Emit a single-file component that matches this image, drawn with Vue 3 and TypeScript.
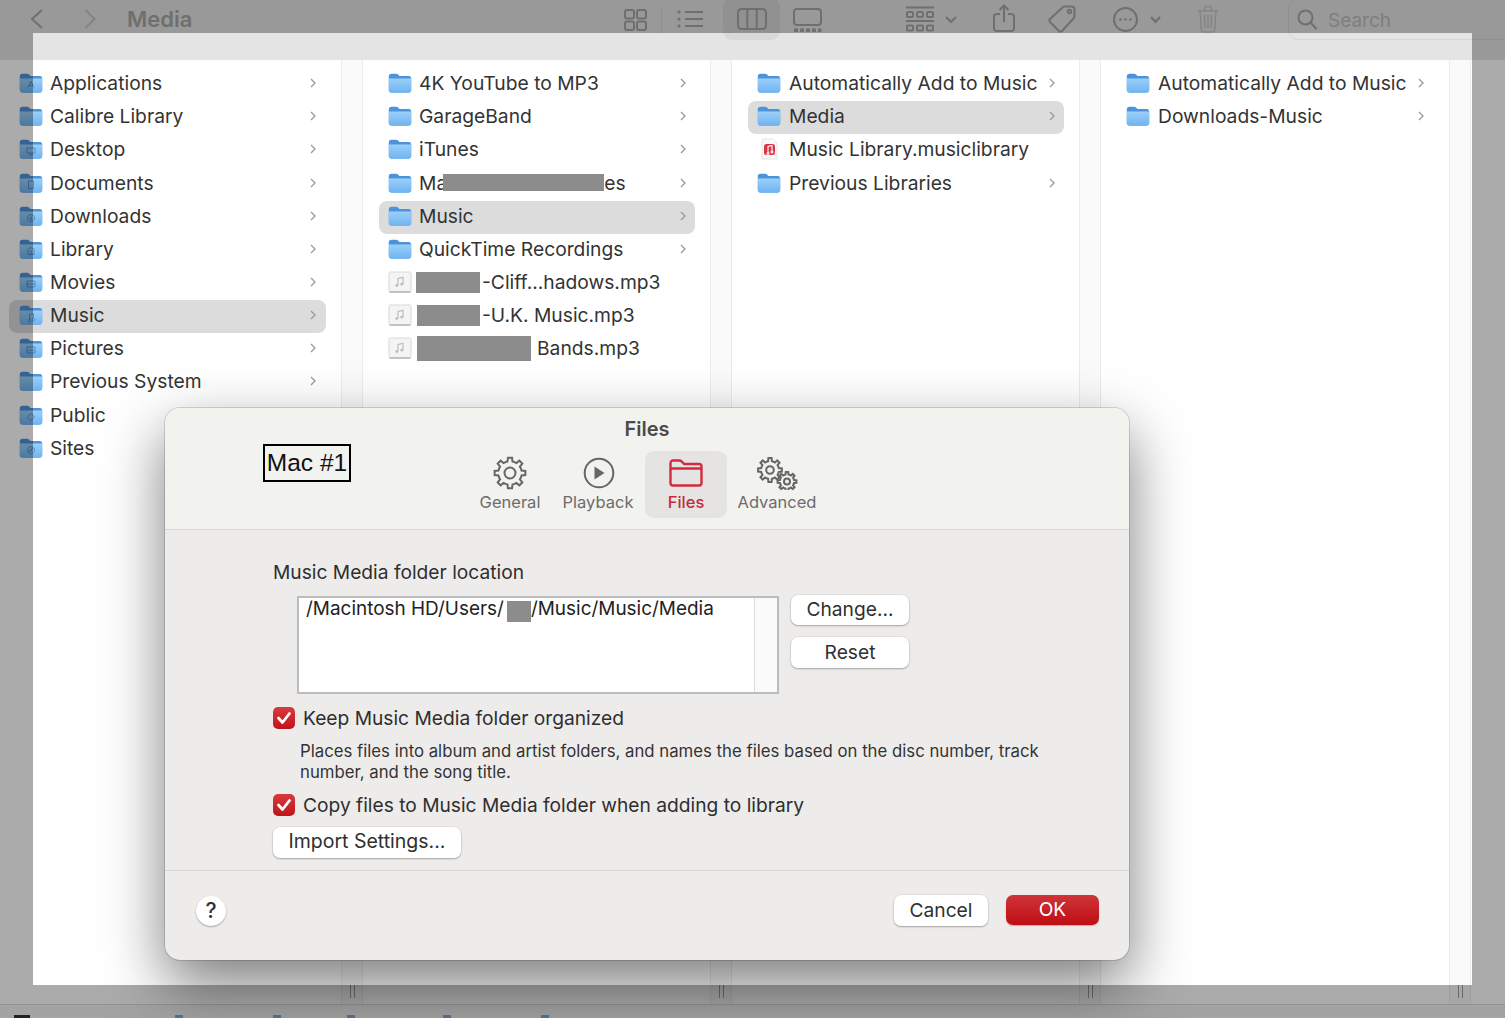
<script setup lang="ts">
interface Row {
  icon: 'folder' | 'file' | 'lib'
  text: string
  before?: string
  redact?: string
  glyph?: string
  selected?: boolean
  chevron?: boolean
}

function f(text: string, extra: Partial<Row> = {}): Row {
  return { icon: 'folder', text, chevron: true, ...extra }
}

const columns: { cls: string; rows: Row[] }[] = [
  {
    cls: 'col-a',
    rows: [
      f('Applications', { glyph: 'M9 14.5 12 8.5l3 6M10 12.5h4' }),
      f('Calibre Library'),
      f('Desktop', { glyph: 'M8 9h8v5H8zM10 15.5h4' }),
      f('Documents', { glyph: 'M9.5 8h5v7.5h-5z' }),
      f('Downloads', { glyph: 'M12 8.5a3.5 3.5 0 1 0 .01 0M12 10v3.5M10.5 12l1.5 1.5 1.5-1.5' }),
      f('Library', { glyph: 'M8.5 10.5 12 8.5l3.5 2M9 11v4M12 11v4M15 11v4M8.5 15.5h7' }),
      f('Movies', { glyph: 'M8 9h8v6H8zM8 12h8' }),
      f('Music', { selected: true, glyph: 'M10.5 14.5V9.5l4-1v5M10.5 14.5a1.2 1.2 0 1 1-.01 0M14.5 13.5a1.2 1.2 0 1 1-.01 0' }),
      f('Pictures', { glyph: 'M8 9h8v6H8zM8 14l3-2.5 2 1.5 1.5-1 1.5 1.5' }),
      f('Previous System'),
      f('Public', { glyph: 'M12 8.5l3.5 3.5-3.5 3.5L8.500 12z' }),
      f('Sites', { glyph: 'M12 8.500a3.500 3.500 0 1 0 .01 0M13.500 10.500l-2 1-1 2 2-1z' }),
    ],
  },
  {
    cls: 'col-b',
    rows: [
      f('4K YouTube to MP3'),
      f('GarageBand'),
      f('iTunes'),
      f('es', { before: 'Ma', redact: 'r-ma' }),
      f('Music', { selected: true }),
      f('QuickTime Recordings'),
      { icon: 'file', text: '-Cliff...hadows.mp3', redact: 'r-a' },
      { icon: 'file', text: '-U.K. Music.mp3', redact: 'r-b' },
      { icon: 'file', text: 'Bands.mp3', redact: 'r-c' },
    ],
  },
  {
    cls: 'col-c',
    rows: [
      f('Automatically Add to Music'),
      f('Media', { selected: true }),
      { icon: 'lib', text: 'Music Library.musiclibrary' },
      f('Previous Libraries'),
    ],
  },
  {
    cls: 'col-d',
    rows: [f('Automatically Add to Music'), f('Downloads-Music')],
  },
]

function gear(cx: number, cy: number, outer: number, inner: number, teeth: number): string {
  const pts: string[] = []
  const step = (Math.PI * 2) / teeth
  for (let i = 0; i < teeth; i++) {
    const a = i * step
    const list: [number, number][] = [
      [inner, a - step * 0.5],
      [inner, a - step * 0.27],
      [outer, a - step * 0.17],
      [outer, a + step * 0.17],
      [inner, a + step * 0.27],
    ]
    for (const [r, t] of list) {
      pts.push(`${(cx + r * Math.cos(t)).toFixed(2)} ${(cy + r * Math.sin(t)).toFixed(2)}`)
    }
  }
  return `M${pts.join('L')}Z`
}

const generalGear = gear(20, 17, 15.5, 11.8, 8)
const bigGear = gear(14, 13, 12, 9, 8)
const smallGear = gear(31, 24.500, 9.500, 7.200, 8)
</script>

<template>
  <div class="stage">
    <svg class="defs" width="0" height="0" aria-hidden="true">
      <defs>
        <linearGradient id="folderFront" x1="0" y1="0" x2="0" y2="1">
          <stop offset="0" stop-color="#9bd0f8" />
          <stop offset="1" stop-color="#6fb3f1" />
        </linearGradient>
        <symbol id="folder" viewBox="0 0 24 20">
          <path d="M.8 3.500A2.700 2.700 0 0 1 3.500.8h4.700c.8 0 1.300.3 1.800.8l1.500 1.500h9.300a2.400 2.400 0 0 1 2.400 2.400v11a3 3 0 0 1-3 3H3.800a3 3 0 0 1-3-3z" fill="#4b94dd" />
          <path d="M.8 5.600h22.400V17a2.700 2.700 0 0 1-2.700 2.700H3.500A2.700 2.700 0 0 1 .8 17z" fill="url(#folderFront)" />
        </symbol>
      </defs>
    </svg>

    <header class="toolbar">
      <div class="tb-left">
        <svg class="back" width="14" height="20" viewBox="0 0 14 20"><path d="M12 1 2 10l10 9" /></svg>
        <svg class="forward" width="12" height="20" viewBox="0 0 12 20"><path d="m1.500 1 9 9-9 9" /></svg>
        <span class="title">Media</span>
      </div>
      <svg class="ic-grid" width="23" height="22" viewBox="0 0 23 22">
        <rect x="1" y="1" width="9" height="8.500" rx="2" /><rect x="13" y="1" width="9" height="8.500" rx="2" />
        <rect x="1" y="12.500" width="9" height="8.500" rx="2" /><rect x="13" y="12.500" width="9" height="8.500" rx="2" />
      </svg>
      <span class="tb-sep"></span>
      <svg class="ic-list" width="27" height="20" viewBox="0 0 27 20">
        <path d="M8 3h18M8 10h18M8 17h18" />
        <circle class="solid" cx="2" cy="3" r="1.500" /><circle class="solid" cx="2" cy="10" r="1.500" /><circle class="solid" cx="2" cy="17" r="1.500" />
      </svg>
      <div class="view-btn">
        <svg width="30" height="22" viewBox="0 0 30 22">
          <rect x="1" y="1" width="28" height="20" rx="3.500" /><path d="M10.300 1v20M19.700 1v20" />
        </svg>
      </div>
      <svg class="ic-gallery" width="29" height="24" viewBox="0 0 29 24">
        <rect x="1" y="1" width="27" height="16" rx="3" />
        <g class="solid"><rect x="1" y="20.500" width="4" height="3.500" /><rect x="7" y="20.500" width="4" height="3.500" /><rect x="13" y="20.500" width="4" height="3.500" /><rect x="19" y="20.500" width="4" height="3.500" /><rect x="25" y="20.500" width="3.500" height="3.500" /></g>
      </svg>
      <svg class="ic-group" width="28" height="27" viewBox="0 0 28 27">
        <path d="M0 1.500h28M0 15h28" />
        <rect x="1" y="6" width="6" height="5" rx="1" /><rect x="11" y="6" width="6" height="5" rx="1" /><rect x="21" y="6" width="6" height="5" rx="1" />
        <rect x="1" y="19.500" width="6" height="5" rx="1" /><rect x="11" y="19.500" width="6" height="5" rx="1" /><rect x="21" y="19.500" width="6" height="5" rx="1" />
      </svg>
      <svg class="ic-chev1" width="12" height="8" viewBox="0 0 12 8"><path d="m1 1 5 5 5-5" /></svg>
      <svg class="ic-share" width="22" height="28" viewBox="0 0 22 28">
        <path d="M7 10H3.500A2.500 2.500 0 0 0 1 12.500v12A2.500 2.500 0 0 0 3.500 27h15a2.500 2.500 0 0 0 2.500-2.500v-12a2.500 2.500 0 0 0-2.500-2.500H15M11 18V1.500M6.500 6 11 1.500 15.500 6" />
      </svg>
      <svg class="ic-tag" width="30" height="30" viewBox="0 0 30 30">
        <path d="M17.500 2.500h7.500a2.500 2.500 0 0 1 2.500 2.500v7.500a3 3 0 0 1-1 2L15 27a2 2 0 0 1-3 0L3 18a2 2 0 0 1 0-3L15.500 3.500a3 3 0 0 1 2-1z" />
        <circle cx="22.500" cy="7.500" r="1.800" />
      </svg>
      <svg class="ic-more" width="25" height="25" viewBox="0 0 25 25">
        <circle cx="12.500" cy="12.500" r="11.500" />
        <circle class="solid" cx="7.500" cy="12.500" r="1.300" /><circle class="solid" cx="12.500" cy="12.500" r="1.300" /><circle class="solid" cx="17.500" cy="12.500" r="1.300" />
      </svg>
      <svg class="ic-chev2" width="11" height="8" viewBox="0 0 11 8"><path d="m1 1 4.500 5L10 1" /></svg>
      <svg class="ic-trash" width="22" height="28" viewBox="0 0 22 28">
        <path d="M1 6h20M7.500 6V3.500A2 2 0 0 1 9.500 1.500h3a2 2 0 0 1 2 2V6M3 6l1.500 19.500a1.500 1.500 0 0 0 1.500 1.500h10a1.500 1.500 0 0 0 1.500-1.500L19 6M7.500 10l.5 13M11 10v13M14.500 10 14 23" />
      </svg>
      <div class="search">
        <svg width="21" height="21" viewBox="0 0 21 21"><circle cx="8.500" cy="8.500" r="7" /><path d="m13.500 13.500 6 6.500" /></svg>
        <span>Search</span>
      </div>
    </header>

    <main class="browser">
      <template v-for="col in columns" :key="col.cls">
        <section class="col" :class="col.cls">
          <div v-for="row in col.rows" :key="row.text" class="row" :class="{ sel: row.selected }">
            <svg v-if="row.icon === 'folder'" class="ico" width="24" height="20" viewBox="0 0 24 20">
              <use href="#folder" width="24" height="20" />
              <path v-if="row.glyph" class="glyph" :d="row.glyph" />
            </svg>
            <svg v-else-if="row.icon === 'file'" class="ico" width="24" height="22" viewBox="0 0 24 22">
              <rect x="1" y="1" width="22" height="20" rx="1.500" fill="#f4f4f4" stroke="#d8d8d8" />
              <path d="M1.500 21h21" stroke="#a8a8a8" stroke-width="1.200" />
              <path d="M10 14.500V7.500l5-1.200v6.800" fill="none" stroke="#bdbdbd" stroke-width="1.200" />
              <circle cx="8.800" cy="14.500" r="1.400" fill="#bdbdbd" /><circle cx="13.800" cy="13.200" r="1.400" fill="#bdbdbd" />
            </svg>
            <svg v-else class="ico" width="24" height="22" viewBox="0 0 24 22">
              <path d="M5 1h11l4 4v16H5z" fill="#f8f8f8" stroke="#e6e6e6" />
              <rect x="7" y="6" width="11" height="11" rx="2.500" fill="#dc3245" />
              <path d="M11 14.500v-6l4-1v5.500M11 14.500a1 1 0 1 1-.01 0M15 13a1 1 0 1 1-.01 0" fill="none" stroke="#fff" stroke-width="1.100" />
            </svg>
            <span class="name">
              <span v-if="row.before">{{ row.before }}</span>
              <span v-if="row.redact" class="redact" :class="row.redact"></span>
              <span>{{ row.text }}</span>
            </span>
            <svg v-if="row.chevron" class="chev" width="6" height="10" viewBox="0 0 6 10"><path d="m1 1 4 4-4 4" /></svg>
          </div>
        </section>
        <div class="strip"><span class="handle"></span></div>
      </template>
      <section class="col col-e"></section>
    </main>

    <footer class="pathbar">
      <i class="crumb dark"></i><i class="crumb c1"></i><i class="crumb c2"></i><i class="crumb c3"></i><i class="crumb c4"></i><i class="crumb c5"></i>
    </footer>

    <div class="hole"></div>

    <div class="dialog">
      <div class="dlg-head">
        <h1>Files</h1>
        <span class="mac-label">Mac #1</span>
        <nav class="tabs">
          <div class="tab">
            <svg width="40" height="34" viewBox="0 0 40 34">
              <path :d="generalGear" /><circle cx="20" cy="17" r="5.500" />
            </svg>
            <span>General</span>
          </div>
          <div class="tab">
            <svg width="40" height="34" viewBox="0 0 40 34">
              <circle cx="21" cy="17" r="14.300" /><path class="play" d="M16.500 10.500v13l10-6.500z" />
            </svg>
            <span>Playback</span>
          </div>
          <div class="tab active">
            <svg width="40" height="34" viewBox="0 0 40 34">
              <path d="M4.500 8V7a2.500 2.500 0 0 1 2.500-2.500h6.500c1 0 1.500.3 2 .8L18 8h15a2.500 2.500 0 0 1 2.500 2.500V27a2.500 2.500 0 0 1-2.500 2.500H7A2.500 2.500 0 0 1 4.500 27zM4.500 12.500h31" />
            </svg>
            <span>Files</span>
          </div>
          <div class="tab adv">
            <svg width="44" height="34" viewBox="0 0 44 34">
              <g transform="translate(1 1)"><path :d="bigGear" /><circle cx="14" cy="13" r="3.800" /><path :d="smallGear" /><circle cx="31" cy="24.500" r="3" /></g>
            </svg>
            <span>Advanced</span>
          </div>
        </nav>
      </div>

      <div class="dlg-body">
        <p class="label">Music Media folder location</p>
        <div class="location">
          <div class="path-box">
            <div class="path-text"><span>/Macintosh HD/Users/</span><span class="redact r-path"></span><span>/Music/Music/Media</span></div>
            <div class="path-scroll"></div>
          </div>
          <div class="loc-btns">
            <button class="btn w118">Change...</button>
            <button class="btn w118 reset">Reset</button>
          </div>
        </div>
        <label class="check first">
          <span class="box"><svg width="16" height="14" viewBox="0 0 16 14"><path d="m2.500 7 4 4.500 7-9" /></svg></span>
          Keep Music Media folder organized
        </label>
        <p class="desc">Places files into album and artist folders, and names the files based on the disc number, track number, and the song title.</p>
        <label class="check second">
          <span class="box"><svg width="16" height="14" viewBox="0 0 16 14"><path d="m2.500 7 4 4.500 7-9" /></svg></span>
          Copy files to Music Media folder when adding to library
        </label>
        <button class="btn import">Import Settings...</button>
      </div>

      <div class="dlg-foot">
        <button class="help">?</button>
        <button class="btn cancel">Cancel</button>
        <button class="btn ok">OK</button>
      </div>
    </div>
  </div>
</template>

<style scoped>
.stage {
  position: relative;
  width: 1505px;
  height: 1018px;
  overflow: hidden;
  display: flex;
  flex-direction: column;
  background: #fff;
  font-family: Inter, "Noto Sans", sans-serif;
  color: #2b2b2b;
}
.defs { position: absolute; }

/* toolbar */
.toolbar {
  flex: 0 0 60px;
  box-sizing: border-box;
  display: flex;
  align-items: flex-start;
  background: #e4e4e4;
  height: 60px;
}
.toolbar > *, .tb-left > * { flex: none; }
.toolbar svg { fill: none; stroke: #a6a6a6; stroke-width: 2; overflow: visible; }
.toolbar .solid { fill: #a6a6a6; stroke: none; }
.tb-left { flex: 0 0 624px; height: 38px; display: flex; align-items: center; }
.back { margin-left: 30px; }
.toolbar svg.forward { margin-left: 40px; stroke: #c4c4c4; }
.title { margin-left: 31px; font-size: 22px; font-weight: 600; color: #a6a6a6; }
.ic-grid { margin-top: 9px; }
.tb-sep { margin: 8px 0 0 14px; width: 1px; height: 26px; background: #d4d4d4; }
.ic-list { margin: 9px 0 0 15px; }
.view-btn {
  margin: -2px 0 0 19px;
  width: 57px;
  height: 42px;
  border-radius: 9px;
  background: rgba(0, 0, 0, 0.05);
  display: flex;
  align-items: center;
  justify-content: center;
}
.ic-gallery { margin: 8px 0 0 13px; }
.ic-group { margin: 6px 0 0 84px; }
.ic-chev1 { margin: 16px 0 0 11px; }
.ic-share { margin: 4px 0 0 36px; }
.ic-tag { margin: 4px 0 0 32px; }
.ic-more { margin: 7px 0 0 36px; }
.ic-chev2 { margin: 16px 0 0 12px; }
.toolbar svg.ic-trash { margin: 5px 0 0 36px; stroke: #c4c4c4; stroke-width: 1.500; }
.search {
  margin: -2px 0 0 69px;
  width: 300px;
  height: 42px;
  box-sizing: border-box;
  border: 1px solid #d6d6d6;
  border-radius: 10px;
  display: flex;
  align-items: center;
  gap: 10px;
  padding-left: 8px;
  font-size: 19px;
  color: #bdbdbd;
}
.search span { margin-top: 3px; }

/* browser */
.browser { flex: 1; display: flex; min-height: 0; }
.col { box-sizing: border-box; padding-top: 8px; flex: none; }
.col-a { width: 341px; padding-left: 9px; }
.col-b, .col-c { width: 347px; padding-left: 16px; }
.col-d { width: 348px; padding-left: 16px; }
.col-e { flex: 1; }
.strip {
  flex: 0 0 22px;
  box-sizing: border-box;
  background: #fafafa;
  border-left: 1px solid #ececec;
  border-right: 1px solid #ececec;
  display: flex;
  flex-direction: column;
  justify-content: flex-end;
  align-items: center;
  padding-bottom: 6px;
}
.handle {
  width: 5px;
  height: 13px;
  box-sizing: border-box;
  border-left: 1px solid #a0a0a0;
  border-right: 1px solid #a0a0a0;
}
.row {
  width: 316px;
  height: 33.160px;
  box-sizing: border-box;
  display: flex;
  align-items: center;
  padding: 0 9px 3px 9px;
  border-radius: 8px;
  font-size: 19.250px;
  white-space: nowrap;
  color: #333;
}
.col-a .row { width: 317px; padding-left: 10px; padding-right: 10px; }
.row.sel { background: #dcdcdc; }
.ico { flex: none; }
.glyph { fill: none; stroke: #3f7dbd; stroke-width: 1; opacity: 0.75; }
.name { margin-left: 7px; display: flex; align-items: center; }
.col-c .name, .col-d .name { margin-left: 8px; }
.chev { margin-left: auto; fill: none; stroke: #9a9a9a; stroke-width: 1.300; flex: none; }
.redact { display: block; background: #8c8c8c; flex: none; }
.r-ma { width: 161px; height: 17px; margin-left: -4px; }
.r-a { width: 64px; height: 21px; margin: 0 2px 0 -3px; }
.r-b { width: 63px; height: 21px; margin: 0 2px 0 -2px; }
.r-c { width: 114px; height: 25px; margin: 0 6px 0 -2px; }
.r-path { width: 24px; height: 21px; margin: 3px 0 0 3px; }

.pathbar {
  flex: 0 0 13px;
  box-sizing: border-box;
  background: #f4f4f4;
  border-top: 1px solid #d8d8d8;
  display: flex;
  align-items: flex-start;
  padding-top: 10px;
}
.crumb { display: block; height: 3px; width: 8px; background: #7fb0e0; flex: none; }
.crumb.dark { background: #333; width: 16px; margin-left: 14px; }
.c1 { margin-left: 145px; }
.c2 { margin-left: 90px; }
.c3 { margin-left: 66px; }
.c4 { margin-left: 88px; }
.c5 { margin-left: 90px; }

.hole {
  position: absolute;
  left: 33px;
  top: 33px;
  width: 1439px;
  height: 952px;
  box-shadow: 0 0 0 1600px rgba(0, 0, 0, 0.33);
  pointer-events: none;
}

/* dialog */
.dialog {
  position: absolute;
  left: 165px;
  top: 408px;
  width: 964px;
  height: 552px;
  border-radius: 15px;
  display: flex;
  flex-direction: column;
  background: #eeecea;
  box-shadow: 0 0 0 1px rgba(0, 0, 0, 0.14), 0 24px 60px rgba(0, 0, 0, 0.52);
}
.dlg-head {
  position: relative;
  flex: 0 0 122px;
  box-sizing: border-box;
  background: #f2f2ef;
  border-bottom: 1px solid #d6d6d4;
  border-radius: 15px 15px 0 0;
  padding-top: 8px;
}
h1 {
  margin: 0;
  text-align: center;
  font-size: 20px;
  line-height: 26px;
  font-weight: 600;
  color: #4a4a4a;
}
.mac-label {
  position: absolute;
  left: 98px;
  top: 36px;
  width: 88px;
  height: 38px;
  box-sizing: border-box;
  border: 2px solid #000;
  font-family: "Liberation Sans", Arial, sans-serif;
  font-size: 24.500px;
  line-height: 34px;
  text-align: center;
  color: #111;
}
.tabs {
  display: flex;
  gap: 6px;
  margin-top: 9px;
  padding-left: 304px;
}
.tab {
  width: 82px;
  height: 67px;
  border-radius: 9px;
  display: flex;
  flex-direction: column;
  align-items: center;
  padding-top: 5px;
  box-sizing: border-box;
  font-size: 16.500px;
  line-height: 22px;
  color: #6c6c6c;
}
.tab.adv { margin-left: 3px; }
.tab svg { fill: none; stroke: #666; stroke-width: 2; flex: none; margin-bottom: 1px; }
.tab .play { fill: #666; stroke: none; }
.tab.active { background: #e5e4e2; color: #c8283c; font-weight: 500; }
.tab.active svg { stroke: #d22b41; stroke-width: 2.400; stroke-linejoin: round; }

.dlg-body {
  flex: 1;
  box-sizing: border-box;
  padding: 29px 0 0 108px;
}
.label { margin: 0; font-size: 19.200px; line-height: 26px; color: #2f2f2f; height: 26px; }
.location { display: flex; margin: 11px 0 0 24px; align-items: flex-start; }
.path-box {
  width: 482px;
  height: 98px;
  box-sizing: border-box;
  border: 2px solid #bcbcbc;
  background: #fff;
  display: flex;
}
.path-text {
  flex: 1;
  display: flex;
  align-items: flex-start;
  padding: 0 0 0 7px;
  font-size: 18.950px;
  line-height: 22px;
  color: #222;
  white-space: nowrap;
}
.path-scroll { flex: 0 0 22px; border-left: 1px solid #dadada; background: #fafafa; }
.loc-btns { margin: -1px 0 0 12px; display: flex; flex-direction: column; gap: 12px; }
.btn {
  border: 0;
  margin: 0;
  padding: 0 0 2px;
  background: #fff;
  border-radius: 7px;
  box-shadow: 0 1px 2px rgba(0, 0, 0, 0.28), 0 0 0 0.5px rgba(0, 0, 0, 0.08);
  font-family: inherit;
  font-size: 19.200px;
  color: #2f2f2f;
  text-align: center;
}
.w118 { width: 118px; height: 30px; }
.w118.reset { height: 31px; }
.check { display: flex; align-items: center; gap: 8px; height: 24px; font-size: 19.200px; color: #2f2f2f; }
.check.first { margin-top: 12px; }
.check.second { margin-top: 10px; }
.box {
  width: 22px;
  height: 22px;
  flex: none;
  border-radius: 5px;
  background: linear-gradient(#d93a3e, #bf1419);
  display: flex;
  align-items: center;
  justify-content: center;
}
.box svg { fill: none; stroke: #fff; stroke-width: 2.800; stroke-linecap: round; stroke-linejoin: round; }
.desc {
  margin: 11px 0 0 27px;
  width: 760px;
  font-size: 16.750px;
  line-height: 21px;
  color: #333;
}
.import { display: block; width: 188px; height: 31px; margin-top: 10px; padding-bottom: 3px; font-size: 19.500px; }

.dlg-foot {
  flex: 0 0 90px;
  box-sizing: border-box;
  border-top: 1px solid #d6d6d4;
  border-radius: 0 0 15px 15px;
  display: flex;
  align-items: center;
  padding: 0 30px 10px 31px;
}
.help {
  width: 30px;
  height: 30px;
  border: 0;
  padding: 0;
  border-radius: 50%;
  background: #fff;
  box-shadow: 0 1px 2px rgba(0, 0, 0, 0.3);
  font-family: inherit;
  font-size: 21px;
  font-weight: 500;
  color: #333;
}
.cancel { margin-left: auto; width: 94px; height: 31px; }
.ok {
  margin: 0 0 1px 18px;
  width: 93px;
  height: 30px;
  background: linear-gradient(#cf3438, #bd0e14);
  color: #fff;
  box-shadow: 0 1px 1px rgba(190, 20, 20, 0.35);
}
</style>
